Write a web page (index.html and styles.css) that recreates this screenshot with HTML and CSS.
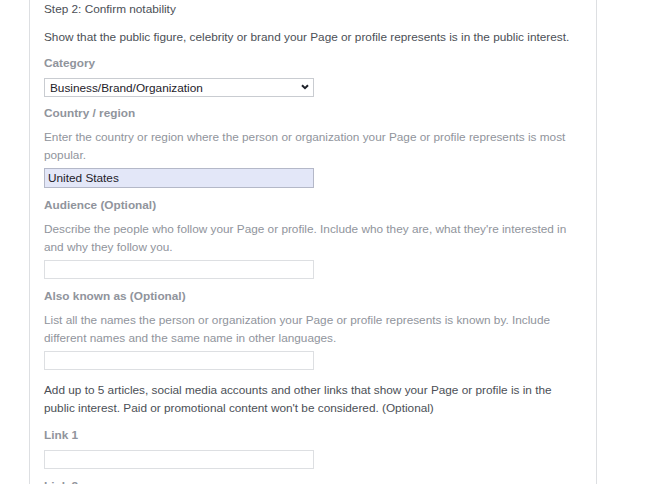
FILE: index.html
```html
<!DOCTYPE html>
<html lang="en">
<head>
    <meta charset="UTF-8">
    <meta name="viewport" content="width=device-width, initial-scale=1.0">
    <title>Request a verified badge</title>
    <link rel="stylesheet" href="styles.css">
</head>
<body>
    <div class="card">
        <div class="step-title">Step 2: Confirm notability</div>
        <p class="intro">Show that the public figure, celebrity or brand your Page or profile represents is in the public interest.</p>

        <div class="field field-select">
            <label class="label" for="category">Category</label>
            <div class="select-wrap">
                <select id="category" class="select">
                    <option>Business/Brand/Organization</option>
                    <option>News/Media</option>
                    <option>Sports</option>
                </select>
                <svg class="chevron" width="8" height="6" viewBox="0 0 8 6"><path d="M1 1.2l3 3 3-3" fill="none" stroke="#1d2129" stroke-width="2"/></svg>
            </div>
        </div>

        <div class="field">
            <label class="label" for="country">Country / region</label>
            <p class="help">Enter the country or region where the person or organization your Page or profile represents is most popular.</p>
            <input id="country" class="input filled" type="text" value="United States">
        </div>

        <div class="field">
            <label class="label" for="audience">Audience (Optional)</label>
            <p class="help">Describe the people who follow your Page or profile. Include who they are, what they're interested in and why they follow you.</p>
            <input id="audience" class="input" type="text">
        </div>

        <div class="field">
            <label class="label" for="aka">Also known as (Optional)</label>
            <p class="help">List all the names the person or organization your Page or profile represents is known by. Include different names and the same name in other languages.</p>
            <input id="aka" class="input" type="text">
        </div>

        <p class="links-note">Add up to 5 articles, social media accounts and other links that show your Page or profile is in the public interest. Paid or promotional content won't be considered. (Optional)</p>

        <div class="field">
            <label class="label" for="link1">Link 1</label>
            <input id="link1" class="input" type="text">
        </div>

        <div class="field">
            <label class="label" for="link2">Link 2</label>
            <input id="link2" class="input" type="text">
        </div>
    </div>
</body>
</html>
```

FILE: styles.css
```css
body { margin: 0; background: #fff; font-family: "Liberation Sans", Arial, Helvetica, sans-serif; font-size: 11.8px; line-height: 18px; color: #4b4f56; }
p { margin: 0; }
.card { margin-left: 29px; width: 538px; padding: 0 14px 40px; border: 1px solid #dddfe2; border-top: none; }
.step-title { color: #4b4f56; }
.intro { margin-top: 10px; margin-bottom: 8px; }
.field { margin-bottom: 8px; }
.field-select { margin-bottom: 7px; }
.label { display: block; font-weight: bold; color: #90949c; margin-bottom: 6px; }
.help { color: #90949c; margin-bottom: 4px; }
.select-wrap { position: relative; width: 270px; }
.select { display: block; appearance: none; -webkit-appearance: none; width: 270px; height: 19px; margin: 0; padding: 0 5px; border: 1px solid #c9ccd1; border-radius: 0; background: #fff; font-family: inherit; font-size: 11.8px; color: #1d2129; }
.chevron { position: absolute; right: 5px; top: 6px; }
.input { display: block; box-sizing: border-box; width: 270px; height: 19px; margin: 0; padding: 0 3px; border: 1px solid #dddfe2; border-radius: 0; background: #fff; font-family: inherit; font-size: 11.8px; color: #1d2129; outline: none; }
.input.filled { height: 20px; background: #e3e7f8; border-color: #b4b8c8; }
.links-note { margin-top: 11px; margin-bottom: 9px; }
```
